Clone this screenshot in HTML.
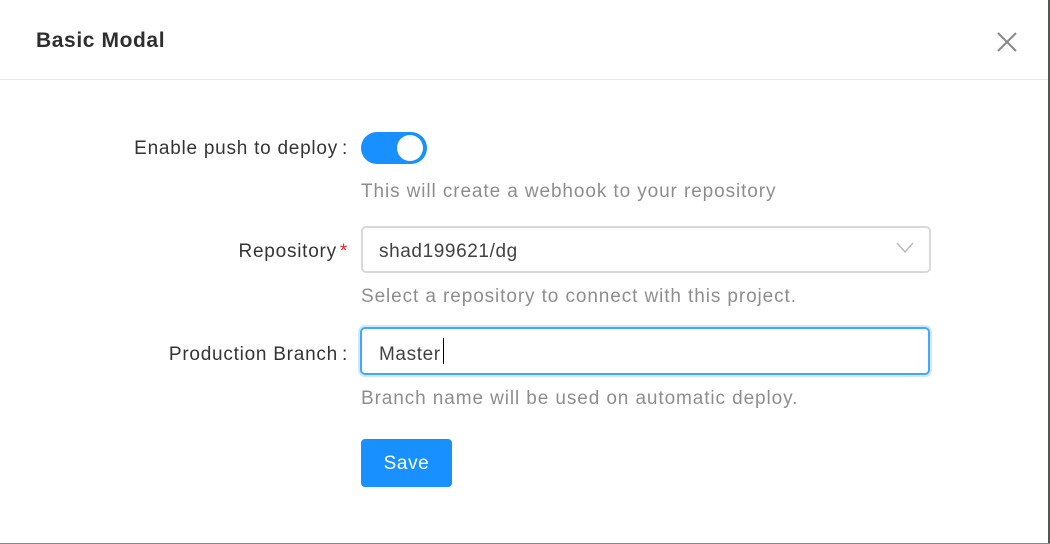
<!DOCTYPE html><html><head><style>
body{margin:0;width:1050px;height:544px;background:#fff;font-family:"Liberation Sans",sans-serif;position:relative;overflow:hidden;color:rgba(0,0,0,.75)}
.a{position:absolute}
.lbl{position:absolute;right:702px;font-size:19px;color:rgba(0,0,0,.8);white-space:nowrap;letter-spacing:.75px}
.help{position:absolute;left:361px;font-size:19px;color:rgba(0,0,0,.45);white-space:nowrap;letter-spacing:.9px}
</style></head><body>
<div class="a" style="right:0;top:0;width:2px;height:544px;background:#555"></div>
<div class="a" style="left:0;bottom:0;width:1050px;height:1px;background:#888"></div>
<div class="a" style="left:36px;top:29px;font-size:21px;font-weight:bold;color:rgba(0,0,0,.82);letter-spacing:.6px">Basic Modal</div>
<svg class="a" style="left:996px;top:31px" width="22" height="22"><path d="M2 2L20 20M20 2L2 20" stroke="#888" stroke-width="2"/></svg>
<div class="a" style="left:0;top:79px;width:1048px;height:1px;background:#e8e8e8"></div>
<div class="lbl" style="top:138px">Enable push to deploy<span style="margin-left:4px">:</span></div>
<div class="a" style="left:361px;top:132px;width:66px;height:32px;border-radius:16px;background:#1890ff"></div>
<div class="a" style="left:397px;top:135px;width:26px;height:26px;border-radius:50%;background:#fff"></div>
<div class="help" style="top:181px">This will create a webhook to your repository</div>
<div class="lbl" style="top:241px">Repository<span style="color:#f5222d;margin-left:3px">*</span></div>
<div class="a" style="left:361px;top:226px;width:566px;height:43px;border:2px solid #d9d9d9;border-radius:5px"></div>
<div class="a" style="left:379px;top:241px;font-size:19px;letter-spacing:.6px">shad199621/dg</div>
<svg class="a" style="left:896px;top:242px" width="18" height="12"><path d="M1 1L9 10L17 1" fill="none" stroke="#bbb" stroke-width="1.5"/></svg>
<div class="help" style="top:286px">Select a repository to connect with this project.</div>
<div class="lbl" style="top:344px">Production Branch<span style="margin-left:4px">:</span></div>
<div class="a" style="left:360px;top:327px;width:566px;height:44px;border:2px solid #40a9ff;border-radius:5px;box-shadow:0 0 0 2px rgba(24,144,255,.2)"></div>
<div class="a" style="left:379px;top:344px;font-size:19px;letter-spacing:.6px">Master</div>
<div class="a" style="left:443px;top:338px;width:1px;height:26px;background:#000"></div>
<div class="help" style="top:388px">Branch name will be used on automatic deploy.</div>
<div class="a" style="left:361px;top:439px;width:91px;height:48px;background:#1890ff;border-radius:4px;color:#fff;font-size:19px;text-align:center;line-height:50px;letter-spacing:.6px">Save</div>
</body></html>
